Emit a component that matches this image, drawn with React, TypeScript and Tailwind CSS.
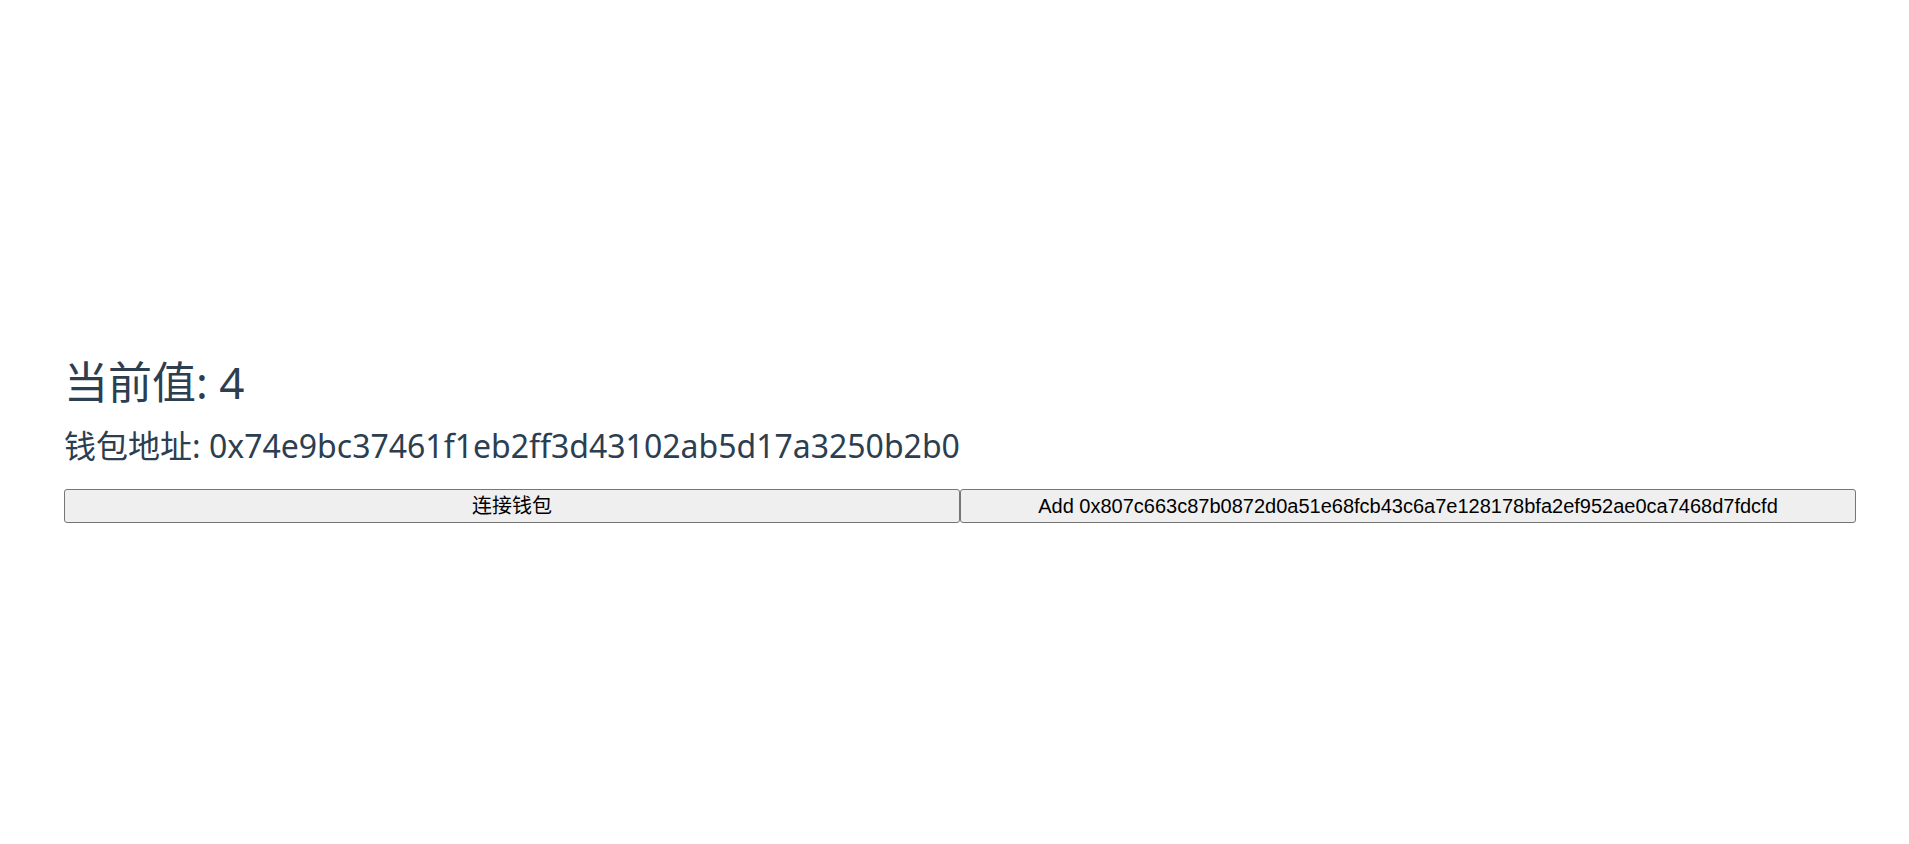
import React from "react";

export default function App() {
  return (
    <div className="w-[1909px] h-[844px] bg-white pt-[356px] pl-[64px] text-[#2c3e50]" style={{ fontFamily: '"Noto Sans", "Noto Sans CJK SC", sans-serif' }}>
      <h1 className="text-[44px] leading-[52px] font-normal m-0">当前值: 4</h1>
      <h2 className="text-[32px] leading-[40px] font-normal mt-[18px]">钱包地址: 0x74e9bc37461f1eb2ff3d43102ab5d17a3250b2b0</h2>
      <div className="flex mt-[23px]">
        <button
          className="w-[896px] h-[34px] bg-[#efefef] border border-[#767676] rounded-[3px] text-[20px] leading-[24px] text-black"
          style={{ fontFamily: '"Liberation Sans", "Noto Sans CJK SC", sans-serif' }}
        >
          连接钱包
        </button>
        <button
          className="w-[896px] h-[34px] bg-[#efefef] border border-[#767676] rounded-[3px] text-[20px] leading-[24px] text-black"
          style={{ fontFamily: '"Liberation Sans", "Noto Sans CJK SC", sans-serif' }}
        >
          Add 0x807c663c87b0872d0a51e68fcb43c6a7e128178bfa2ef952ae0ca7468d7fdcfd
        </button>
      </div>
    </div>
  );
}
